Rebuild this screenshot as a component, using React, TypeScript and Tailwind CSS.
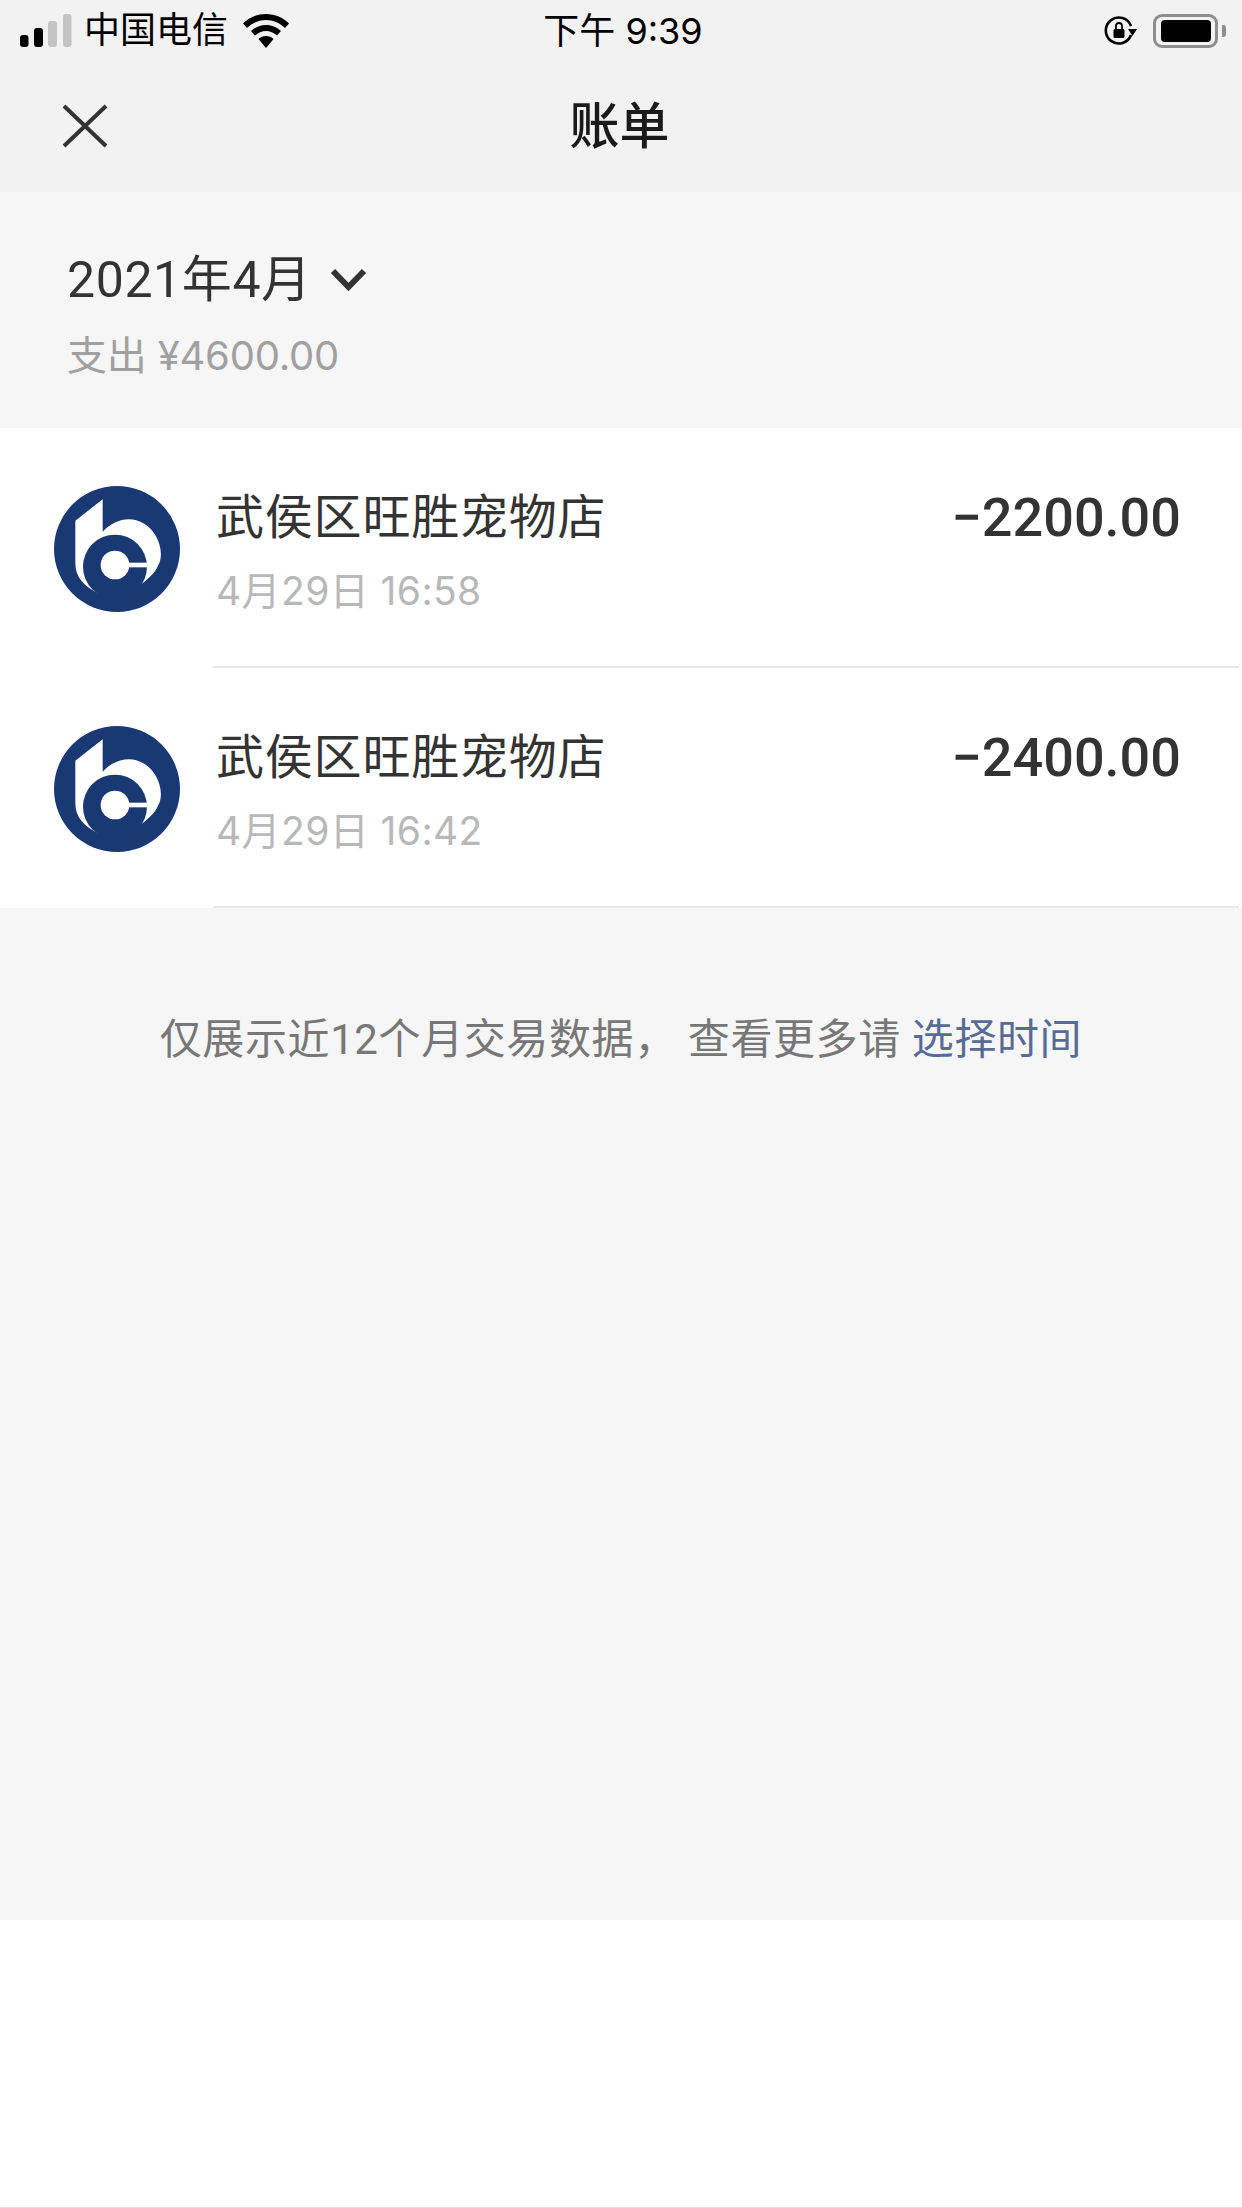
const cjk = "font-['Roboto','Noto_Sans_CJK_SC',sans-serif]"
const inter = "font-['Inter','Noto_Sans_CJK_SC',sans-serif]"

const bills = [
  { time: '4月29日 16:58', amount: '−2200.00' },
  { time: '4月29日 16:42', amount: '−2400.00' },
]

function BankLogo() {
  return (
    <svg viewBox="72 48 378 378" className="h-[126px] w-[126px] shrink-0">
      <circle cx="261" cy="237" r="189" fill="#193874" />
      <path
        d="M218 88 L218 185 C250 150 300 135 340 160 C385 185 405 250 385 285 C375 310 355 325 335 342 L210 372 C160 350 136 320 136 280 L136 152 Z"
        fill="#fff"
      />
      <circle cx="255" cy="290" r="96" fill="#193874" />
      <circle cx="255" cy="285" r="43" fill="#fff" />
      <rect x="285" y="278" width="70" height="14" fill="#fff" />
    </svg>
  )
}

function StatusBar() {
  return (
    <div className="grid h-[62px] grid-cols-3 items-center pl-5 pr-4 text-black">
      <div className="flex items-center">
        <svg width="52" height="34" viewBox="0 0 52 34">
          <rect x="0" y="21" width="8.5" height="12" rx="3" fill="#000" />
          <rect x="14" y="14" width="9" height="19" rx="3" fill="#000" />
          <rect x="28" y="7" width="9" height="26" rx="3" fill="#c4c4c4" />
          <rect x="43" y="0" width="8.5" height="33" rx="3" fill="#c4c4c4" />
        </svg>
        <span className={`ml-[12px] text-[36px] leading-none ${cjk}`}>中国电信</span>
        <svg width="46" height="34" viewBox="0 0 46 34" className="ml-[15px]">
          <path d="M23 0C14 0 6 3.500 0 9.500L4 14C9 9 15.500 6 23 6S37 9 42 14L46 9.500C40 3.500 32 0 23 0Z" fill="#000" />
          <path d="M23 11C17 11 12 13.500 8 17L12 21.500C15 19 19 17 23 17S31 19 34 21.500L38 17C34 13.500 29 11 23 11Z" fill="#000" />
          <path d="M23 22C20 22 17.500 23 15.500 25L23 34L30.500 25C28.500 23 26 22 23 22Z" fill="#000" />
        </svg>
      </div>
      <div className={`text-center text-[36px] leading-none ${inter}`}>下午 9:39</div>
      <div className="flex items-center justify-end gap-[16px]">
        <svg width="33" height="30" viewBox="0 0 33 30">
          <path d="M27 19A13 13 0 1 1 27 10" fill="none" stroke="#000" strokeWidth="2.600" />
          <path d="M24 13H33L28.500 20Z" fill="#000" />
          <rect x="9.500" y="13" width="11" height="9" rx="1.500" fill="#000" />
          <path d="M12 13V10A3 3 0 0 1 18 10V13" fill="none" stroke="#000" strokeWidth="1.800" />
        </svg>
        <div className="flex items-center gap-[4px]">
          <div className="flex h-[34px] w-[65px] items-center justify-center rounded-[9px] border-[3px] border-[#8e8e8e]">
            <div className="h-[22px] w-[50px] rounded-[4px] bg-black" />
          </div>
          <div className="h-[12px] w-[4px] rounded-r-[3px] bg-[#8e8e8e]" />
        </div>
      </div>
    </div>
  )
}

function BillRow({ time, amount }: { time: string; amount: string }) {
  return (
    <div className="relative flex h-[240px] pl-[54px] pr-[61px] pt-[58px]">
      <BankLogo />
      <div className="ml-[36px] flex-1">
        <div className={`text-[48px] leading-[64px] tracking-[0.8px] text-[#333] ${cjk}`}>武侯区旺胜宠物店</div>
        <div className={`mt-[16px] text-[39px] leading-[50px] tracking-[0.4px] text-[#b8b8b8] ${inter}`}>{time}</div>
      </div>
      <div className="text-right font-['Roboto',sans-serif] text-[54px] font-medium leading-[64px] text-[#333]">
        {amount}
      </div>
      <div className="absolute bottom-0 left-[213px] right-[3px] h-[2px] bg-[#e8e8e8]" />
    </div>
  )
}

export default function App() {
  return (
    <div className="flex h-[2208px] w-[1242px] flex-col bg-white">
      <div className="h-[192px] bg-[#f2f2f2]">
        <StatusBar />
        <div className="relative flex h-[130px] items-center justify-center pr-[3px]">
          <svg width="46" height="44" viewBox="0 0 46 44" className="absolute left-[62px] top-[42px]">
            <path d="M2 2L44 42M44 2L2 42" stroke="#333" strokeWidth="4" fill="none" />
          </svg>
          <span className={`text-[50px] font-medium leading-none text-[#1a1a1a] ${cjk}`}>账单</span>
        </div>
      </div>

      <div className="h-[236px] bg-[#f6f6f6] pl-[67px] pt-[56px]">
        <div className="flex items-center">
          <span className={`text-[50px] leading-[64px] tracking-[0.6px] text-[#333] ${cjk}`}>2021年4月</span>
          <svg width="37" height="26" viewBox="0 0 37 26" className="ml-[18px]">
            <path d="M3 4L18.500 20L34 4" stroke="#333" strokeWidth="6" fill="none" />
          </svg>
        </div>
        <div className={`mt-[18px] text-[40px] leading-[52px] tracking-[-0.2px] text-[#a0a0a0] ${inter}`}>支出 ¥4600.00</div>
      </div>

      <div className="bg-white">
        {bills.map((bill) => (
          <BillRow key={bill.time} time={bill.time} amount={bill.amount} />
        ))}
      </div>

      <div className="h-[1012px] bg-[#f6f6f6] pt-[104px] text-center">
        <p className={`text-[42px] leading-[56px] tracking-[0.6px] text-[#777] ${cjk}`}>
          仅展示近12个月交易数据， 查看更多请 <span className="text-[#576b95]">选择时间</span>
        </p>
      </div>

      <div className="flex-1 border-b border-[#e0e0e0] bg-white" />
    </div>
  )
}
